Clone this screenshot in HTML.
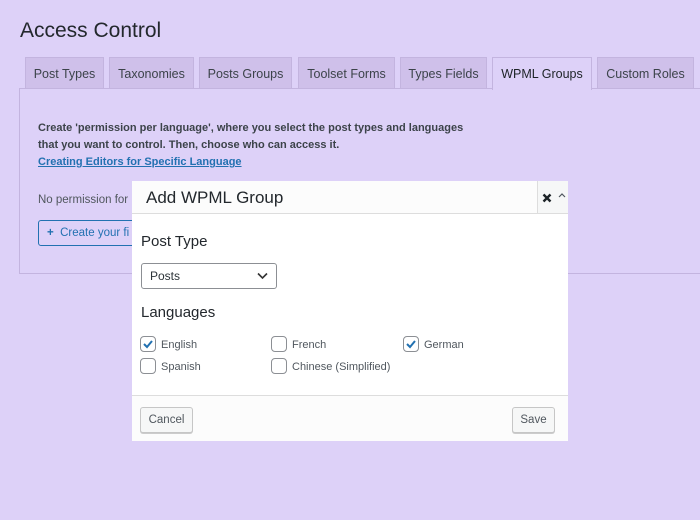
<!DOCTYPE html>
<html><head><style>
*{box-sizing:border-box;margin:0;padding:0}
body{width:700px;height:520px;background:#ddd1f8;font-family:"Liberation Sans",sans-serif;color:#23282d;position:relative;overflow:hidden}
.a{position:absolute}
h1{position:absolute;left:20px;top:19px;font-size:21px;font-weight:400;color:#23282d}
.tab{position:absolute;top:57px;height:32px;background:#cfc0ea;border:1px solid #c3b4df;border-bottom:none;font-size:12.5px;color:#3c434a;line-height:32px;text-align:center}
.tab.on{background:#ddd1f8;color:#1d2327;height:33px;z-index:2}
.panel{position:absolute;left:19px;top:88px;width:700px;height:186px;border:1px solid #c3b4df}
.b{font-size:11px;font-weight:bold;color:#3c434a}
.cb{position:absolute;width:16px;height:16px;border:1px solid #8c8f94;border-radius:4px;background:#fff}
.lbl{position:absolute;font-size:11px;color:#50575e}
.btn{position:absolute;height:26px;border:1px solid #c6c6c6;border-radius:3px;background:#f6f7f7;font-size:11.5px;color:#50575e;line-height:24px;text-align:center;box-shadow:0 1px 0 #ccc}
</style></head><body>
<h1>Access Control</h1>
<div class="tab" style="left:25px;width:79px">Post Types</div>
<div class="tab" style="left:109px;width:85px">Taxonomies</div>
<div class="tab" style="left:199px;width:93px">Posts Groups</div>
<div class="tab" style="left:298px;width:97px">Toolset Forms</div>
<div class="tab" style="left:400px;width:87px">Types Fields</div>
<div class="tab on" style="left:492px;width:100px">WPML Groups</div>
<div class="tab" style="left:597px;width:97px">Custom Roles</div>
<div class="panel"></div>
<div class="a b" style="left:38px;top:120px;line-height:17px">Create 'permission per language', where you select the post types and languages<br>that you want to control. Then, choose who can access it.<br><span style="color:#2271b1;text-decoration:underline">Creating Editors for Specific Language</span></div>
<div class="a" style="left:38px;top:194px;font-size:11.5px;color:#50575e">No permission for</div>
<div class="a" style="left:38px;top:220px;width:110px;height:26px;border:1px solid #2271b1;border-radius:3px;font-size:11.5px;color:#2271b1;line-height:24px;padding-left:8px"><b>+</b>&nbsp; Create your fi</div>

<div class="a" style="left:132px;top:181px;width:436px;height:260px;background:#fff">
 <div class="a" style="left:0;top:0;width:436px;height:33px;background:#fcfcfc;border-bottom:1px solid #ddd"></div>
 <div class="a" style="left:14px;top:7px;font-size:17px;color:#23282d">Add WPML Group</div>
 <div class="a" style="left:405px;top:0;width:31px;height:33px;border-left:1px solid #ddd;border-bottom:1px solid #ddd;background:#f6f7f7"></div>
 <svg class="a" style="left:410px;top:12px" width="10" height="10"><path d="M1.5 1.5L8.5 8.5M8.5 1.5L1.5 8.5" stroke="#1d2327" stroke-width="2.4"/></svg>
 <svg class="a" style="left:426px;top:11px" width="8" height="6"><path d="M1 5L4 2L7 5" stroke="#50575e" stroke-width="1.2" fill="none"/></svg>
 <div class="a" style="left:9px;top:52px;font-size:15px">Post Type</div>
 <div class="a" style="left:9px;top:82px;width:136px;height:26px;border:1px solid #8c8f94;border-radius:3px;font-size:12px;line-height:24px;padding-left:8px;color:#2c3338">Posts
  <svg class="a" style="right:8px;top:8px" width="11" height="8" viewBox="0 0 11 8"><path d="M1 1.5L5.5 6L10 1.5" stroke="#333" stroke-width="1.6" fill="none"/></svg></div>
 <div class="a" style="left:9px;top:123px;font-size:15px">Languages</div>
 <div class="cb" style="left:8px;top:155px"><svg width="14" height="14"><path d="M3 7l3 3 5-6" stroke="#2271b1" stroke-width="2" fill="none"/></svg></div>
 <div class="lbl" style="left:29px;top:158px">English</div>
 <div class="cb" style="left:139px;top:155px"></div>
 <div class="lbl" style="left:160px;top:158px">French</div>
 <div class="cb" style="left:271px;top:155px"><svg width="14" height="14"><path d="M3 7l3 3 5-6" stroke="#2271b1" stroke-width="2" fill="none"/></svg></div>
 <div class="lbl" style="left:292px;top:158px">German</div>
 <div class="cb" style="left:8px;top:177px"></div>
 <div class="lbl" style="left:29px;top:180px">Spanish</div>
 <div class="cb" style="left:139px;top:177px"></div>
 <div class="lbl" style="left:160px;top:180px">Chinese (Simplified)</div>
 <div class="a" style="left:0;top:214px;width:436px;height:46px;background:#fcfcfc;border-top:1px solid #ddd"></div>
 <div class="btn" style="left:8px;top:226px;width:53px">Cancel</div>
 <div class="btn" style="left:380px;top:226px;width:43px">Save</div>
</div>
</body></html>
